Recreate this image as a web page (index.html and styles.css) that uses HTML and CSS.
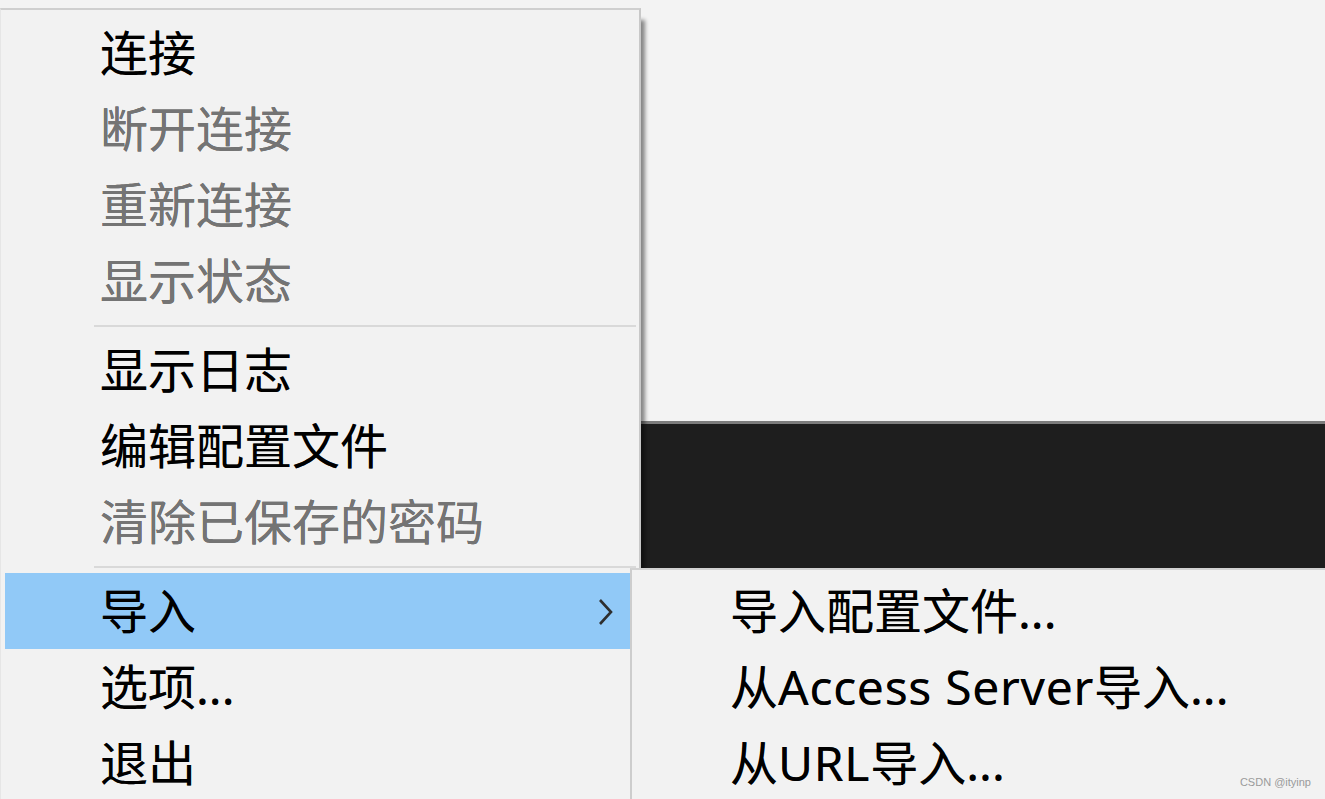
FILE: index.html
```html
<!DOCTYPE html>
<html lang="zh-CN">
<head>
<meta charset="utf-8">
<title>Menu</title>
<link rel="stylesheet" href="styles.css">
</head>
<body>
<div class="desk">
  <div class="dark-window"></div>

  <div class="menu main-menu">
    <div class="item">连接</div>
    <div class="item disabled">断开连接</div>
    <div class="item disabled">重新连接</div>
    <div class="item disabled">显示状态</div>
    <div class="sep"></div>
    <div class="item">显示日志</div>
    <div class="item">编辑配置文件</div>
    <div class="item disabled">清除已保存的密码</div>
    <div class="sep"></div>
    <div class="item active">导入
      <svg class="chev" width="16" height="28" viewBox="0 0 16 28"><path d="M2 2 L13 14 L2 26" fill="none" stroke="#2e2e2e" stroke-width="2.6"/></svg>
    </div>
    <div class="item">选项...</div>
    <div class="item">退出</div>
  </div>

  <div class="menu sub-menu">
    <div class="item">导入配置文件...</div>
    <div class="item">从<span class="latin">Access Server</span>导入...</div>
    <div class="item">从<span class="latin">URL</span>导入...</div>
  </div>

  <div class="watermark">CSDN @ityinp</div>
</div>
</body>
</html>
```
FILE: styles.css
```css
html, body {
  margin: 0;
  padding: 0;
}
body {
  background: #f3f3f3;
  font-family: "Noto Sans", "Noto Sans CJK SC", sans-serif;
  overflow: hidden;
}
.desk {
  position: relative;
  width: 1325px;
  height: 799px;
  overflow: hidden;
}
.dark-window {
  position: absolute;
  left: 641px;
  top: 421px;
  right: 0;
  height: 147px;
  background: #1e1e1e;
  border-top: 3px solid #7d7d7d;
  box-sizing: border-box;
}
.menu {
  position: absolute;
  background: #f2f2f2;
  box-sizing: border-box;
}
.main-menu {
  left: 0;
  top: 8px;
  width: 641px;
  height: 820px;
  border: 2px solid #cfcfcf;
  border-left: 1px solid #e6e6e6;
  border-right: 2px solid #c8c8c8;
  padding: 5px 3px 0 4px;
  box-shadow: 6px 10px 4px -2px rgba(0, 0, 0, 0.45);
}
.item {
  height: 76px;
  line-height: 76px;
  font-size: 48px;
  color: #000;
  padding-left: 95px;
  white-space: nowrap;
  position: relative;
  text-shadow: 0 0 0.4px rgba(0, 0, 0, 0.6);
}
.item.disabled {
  color: #747474;
}
.item.active {
  background: #91c9f7;
}
.latin {
  letter-spacing: 0.7px;
}
.chev {
  position: absolute;
  left: 593px;
  top: 25px;
}
.sep {
  height: 13px;
  display: flex;
  align-items: flex-start;
  padding-left: 89px;
}
.sep::before {
  content: "";
  display: block;
  margin-top: 6px;
  height: 2px;
  flex: 1;
  background: #d9d9d9;
}
.sub-menu {
  left: 630px;
  top: 568px;
  width: 720px;
  height: 260px;
  border-top: 2px solid #d2d2d2;
  border-left: 2px solid #cdcdcd;
  padding: 3px 0 0 0;
}
.sub-menu .item {
  padding-left: 98px;
}
.watermark {
  position: absolute;
  right: 14px;
  bottom: 11px;
  font-family: "Liberation Sans", sans-serif;
  font-size: 11px;
  color: #9a9a9a;
}
```
